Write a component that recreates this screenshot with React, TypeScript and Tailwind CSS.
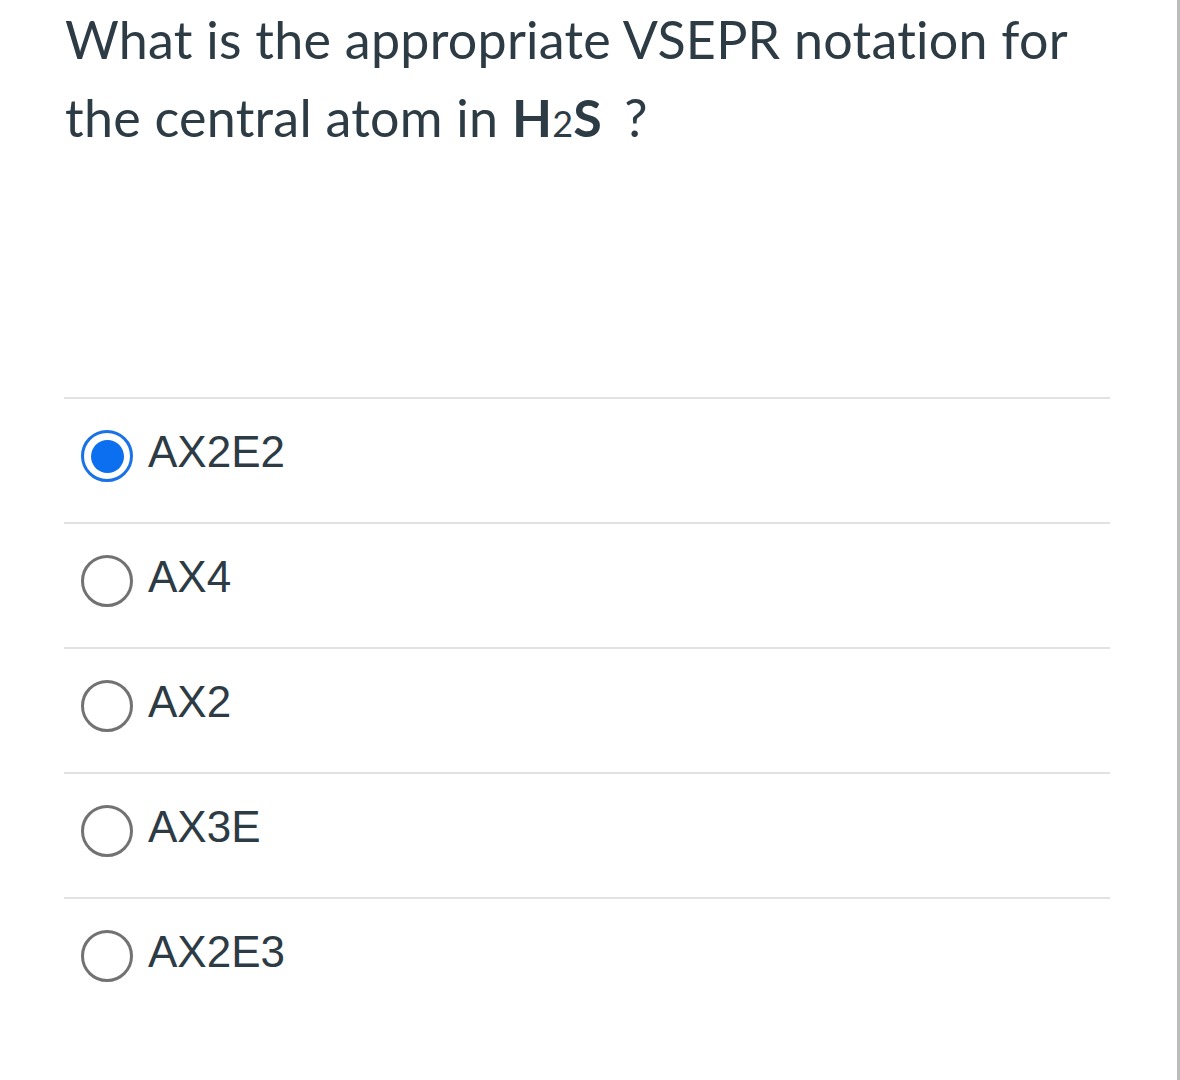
import React from "react";

const options = ["AX2E2", "AX4", "AX2", "AX3E", "AX2E3"];

function Radio({ checked }: { checked: boolean }) {
  if (checked) {
    return (
      <span className="flex h-[52px] w-[52px] shrink-0 items-center justify-center rounded-full border-[3px] border-[#1a73e6] bg-white">
        <span className="block h-[33px] w-[33px] rounded-full bg-[#0b6ff0]" />
      </span>
    );
  }
  return (
    <span className="block h-[52px] w-[52px] shrink-0 rounded-full border-[3px] border-[#727272] bg-white" />
  );
}

export default function App() {
  return (
    <div className="flex min-h-[1080px] w-[1180px] bg-white">
      <div className="flex-1 pl-[64px] pr-[67px]">
        <h1
          className="pl-[1px] text-[52px] font-normal leading-[78px] tracking-[0.25px] text-[#2d3b45]"
          style={{ fontFamily: "Lato, 'Open Sans', sans-serif" }}
        >
          What is the appropriate VSEPR notation for
          <br />
          the central atom in{" "}
          <strong className="font-bold">
            H<span className="text-[36px] font-normal">2</span>S
          </strong>
          <span className="ml-[22px]">?</span>
        </h1>
        <div className="mt-[235px]">
          {options.map((opt, i) => (
            <div
              key={opt}
              className="flex h-[125px] items-center border-t-2 border-[#e2e2e2] pb-[9px] pl-[17px]"
            >
              <Radio checked={i === 0} />
              <span
                className="mb-[9px] ml-[15px] text-[44px] leading-[44px] text-[#2d3b45]"
                style={{ fontFamily: "'Liberation Sans', Arial, sans-serif" }}
              >
                {opt}
              </span>
            </div>
          ))}
        </div>
      </div>
      <div className="w-[3px] shrink-0 bg-[#bcbcbc]" />
    </div>
  );
}
